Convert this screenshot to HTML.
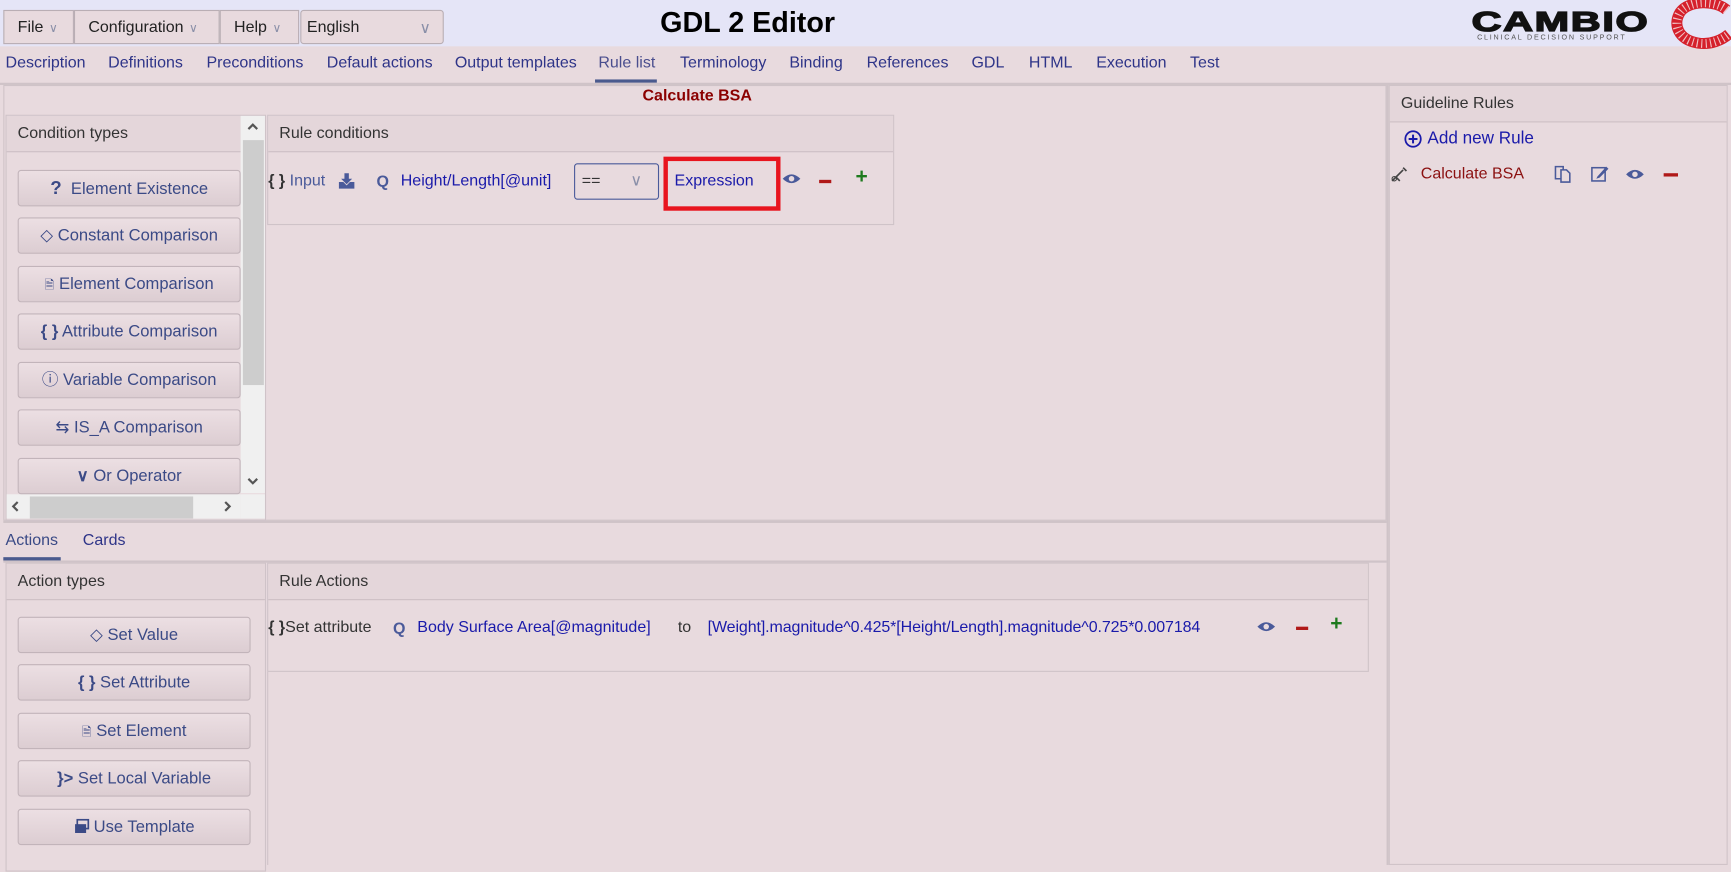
<!DOCTYPE html>
<html><head><meta charset="utf-8"><style>
html,body{margin:0;padding:0;width:1731px;height:865px;overflow:hidden;background:#e8dade}
#w{position:absolute;left:0;top:0;width:1568px;height:784px;transform:scale(1.10395,1.1033);transform-origin:0 0;font-family:"Liberation Sans",Arial,sans-serif;font-size:14.5px;color:#333;background:#e8dade}
.a{position:absolute;white-space:nowrap}
.hdr{left:0;top:0;width:1568px;height:42px;background:#e5e5f7}
.mb{top:9px;height:31px;border:1px solid #b9aeb4;background:#e8dade;line-height:31px;color:#222;padding:0 0 0 12px;box-sizing:border-box}
.chev{color:#8a8fa8;font-size:11px;margin-left:5px}
.tab{top:49px;color:#2e3488}
.box{border:1px solid #cfc3c8;box-sizing:border-box}
.ph{background:#e4d6da;border-bottom:1px solid #cdbfc4;color:#333;line-height:32px;padding-left:10px;box-sizing:border-box}
.btn{left:16px;width:211px;height:33px;border:1px solid #c2b4ba;border-radius:3px;background:linear-gradient(#ecdfe3,#dccdd2);box-sizing:border-box;text-align:center;line-height:31px;color:#3b4a86;font-size:15px}
.btn b{color:#3b4a86}
.blue{color:#1a1aaa}
.ic{color:#4a5a9a}
svg{overflow:visible}
</style></head><body><div id="w">
<div class="a hdr"></div>
<div class="a mb" style="left:3px;width:64px">File<span class="chev">&#8744;</span></div>
<div class="a mb" style="left:67px;width:132px">Configuration<span class="chev">&#8744;</span></div>
<div class="a mb" style="left:199px;width:72px">Help<span class="chev">&#8744;</span></div>
<div class="a mb" style="left:272px;width:130px;padding-left:5px;border-radius:3px">English<span class="chev" style="position:absolute;left:102px;font-size:14px">&#8744;</span></div>
<div class="a" style="left:598px;top:5px;font-size:26px;font-weight:bold;color:#000">GDL 2 Editor</div>
<div class="a" style="left:1333px;top:6px;font-size:25px;font-weight:bold;color:#111;letter-spacing:1px;transform:scale(1.5,1);transform-origin:0 0;-webkit-text-stroke:1.2px #111">CAMBIO</div>
<div class="a" style="left:1338px;top:31px;font-size:6.5px;color:#555;letter-spacing:1.6px">CLINICAL DECISION SUPPORT</div>
<svg class="a" style="left:1508px;top:0" width="60" height="42" viewBox="0 0 60 42"><path d="M56 9 C46 0 22 0 14 11 C7 22 12 36 30 39 C42 41 52 36 58 31" fill="none" stroke="#d5202b" stroke-width="10"/><path d="M56 9 C46 0 22 0 14 11 C7 22 12 36 30 39 C42 41 52 36 58 31" fill="none" stroke="#f0c0c4" stroke-width="8" stroke-dasharray="1 3"/></svg>
<div class="a tab" style="left:5px">Description</div>
<div class="a tab" style="left:98px">Definitions</div>
<div class="a tab" style="left:187px">Preconditions</div>
<div class="a tab" style="left:296px">Default actions</div>
<div class="a tab" style="left:412px">Output templates</div>
<div class="a tab" style="left:542px;color:#4a4e8e">Rule list</div>
<div class="a" style="left:539px;top:72px;width:56px;height:3px;background:#4a5a8e"></div>
<div class="a tab" style="left:616px">Terminology</div>
<div class="a tab" style="left:715px">Binding</div>
<div class="a tab" style="left:785px">References</div>
<div class="a tab" style="left:880px">GDL</div>
<div class="a tab" style="left:932px">HTML</div>
<div class="a tab" style="left:993px">Execution</div>
<div class="a tab" style="left:1078px">Test</div>
<div class="a" style="left:0;top:75px;width:1568px;height:2px;background:#cfc3c8"></div>
<div class="a box" style="left:3px;top:77px;width:1253px;height:395px"></div>
<div class="a" style="left:582px;top:79px;font-weight:bold;color:#8b0000">Calculate BSA</div>
<div class="a box" style="left:5px;top:104px;width:236px;height:368px"></div>
<div class="a ph" style="left:6px;top:105px;width:212px;height:33px">Condition types</div>
<div class="a" style="left:218px;top:105px;width:22px;height:342px;background:#f0f0f0"></div>
<div class="a" style="left:220px;top:127px;width:19px;height:222px;background:#cdcdcd"></div>
<svg class="a" style="left:224px;top:111px" width="10" height="8"><path d="M1 6 L5 2 L9 6" fill="none" stroke="#555" stroke-width="2"/></svg>
<svg class="a" style="left:224px;top:432px" width="10" height="8"><path d="M1 2 L5 6 L9 2" fill="none" stroke="#555" stroke-width="2"/></svg>
<div class="a" style="left:6px;top:448px;width:212px;height:22px;background:#f0f0f0"></div>
<div class="a" style="left:27px;top:450px;width:148px;height:20px;background:#cdcdcd"></div>
<svg class="a" style="left:10px;top:454px" width="8" height="10"><path d="M6 1 L2 5 L6 9" fill="none" stroke="#555" stroke-width="2"/></svg>
<svg class="a" style="left:202px;top:454px" width="8" height="10"><path d="M2 1 L6 5 L2 9" fill="none" stroke="#555" stroke-width="2"/></svg>
<div class="a" style="left:218px;top:448px;width:22px;height:22px;background:#f0f0f0"></div>
<div class="a btn" style="top:154px;width:202px"><b style="font-size:17px">?</b>&nbsp; Element Existence</div>
<div class="a btn" style="top:197px;width:202px">&#9671; Constant Comparison</div>
<div class="a btn" style="top:241px;width:202px"><span style="font-size:11px">&#128462;</span> Element Comparison</div>
<div class="a btn" style="top:284px;width:202px"><b>{ }</b> Attribute Comparison</div>
<div class="a btn" style="top:328px;width:202px">&#9432; Variable Comparison</div>
<div class="a btn" style="top:371px;width:202px">&#8646; IS_A Comparison</div>
<div class="a btn" style="top:415px;width:202px"><b>&#8744;</b> Or Operator</div>
<div class="a box" style="left:242px;top:104px;width:568px;height:100px"></div>
<div class="a ph" style="left:243px;top:105px;width:566px;height:33px">Rule conditions</div>
<div class="a" style="left:243px;top:156px"><b style="color:#333">{ }</b> <span style="color:#4a5a9a">Input</span></div>
<svg class="a" style="left:306px;top:156px" width="16" height="16"><path d="M1 9 L1 15 L15 15 L15 9 L11 9 L8 12 L5 9 Z" fill="#4a5a9a"/><path d="M6 1 L10 1 L10 6 L13 6 L8 11 L3 6 L6 6 Z" fill="#4a5a9a"/></svg>
<div class="a ic" style="left:341px;top:157px;font-weight:bold">Q</div>
<div class="a blue" style="left:363px;top:156px">Height/Length[@unit]</div>
<div class="a" style="left:520px;top:148px;width:77px;height:33px;border:1px solid #4a5a9a;border-radius:3px;box-sizing:border-box;padding:7px 6px;color:#333">==<span style="position:absolute;left:50px;color:#8a8fa8">&#8744;</span></div>
<div class="a" style="left:601px;top:142px;width:106px;height:49px;border:4px solid #e8141e;box-sizing:border-box"></div>
<div class="a blue" style="left:611px;top:156px">Expression</div>
<svg class="a" style="left:709px;top:157px" width="16" height="10"><path d="M0 5 Q8 -3 16 5 Q8 13 0 5Z" fill="#4a5a9a"/><circle cx="8" cy="5" r="2.5" fill="#e8dade"/></svg>
<div class="a" style="left:742px;top:163px;width:11px;height:2.5px;background:#b01818"></div>
<div class="a" style="left:775px;top:150px;color:#1e7a1e;font-weight:bold;font-size:19px">+</div>
<div class="a" style="left:3px;top:472px;width:1253px;height:2px;background:#cfc3c8"></div>
<div class="a" style="left:5px;top:482px;color:#3a4a86">Actions</div>
<div class="a" style="left:3px;top:505px;width:52px;height:3px;background:#4a5a8e"></div>
<div class="a" style="left:75px;top:482px;color:#2e3488">Cards</div>
<div class="a" style="left:3px;top:508px;width:1253px;height:2px;background:#cfc3c8"></div>
<div class="a box" style="left:5px;top:510px;width:236px;height:280px"></div>
<div class="a ph" style="left:6px;top:511px;width:234px;height:33px">Action types</div>
<div class="a btn" style="top:559px">&#9671; Set Value</div>
<div class="a btn" style="top:602px"><b>{ }</b> Set Attribute</div>
<div class="a btn" style="top:646px"><span style="font-size:11px">&#128462;</span> Set Element</div>
<div class="a btn" style="top:689px"><b>}&gt;</b> Set Local Variable</div>
<div class="a btn" style="top:733px"><svg width="14" height="14" style="vertical-align:-2px"><rect x="3" y="1" width="10" height="8" fill="none" stroke="#3b4a86" stroke-width="1.5"/><rect x="1" y="5" width="10" height="8" fill="#3b4a86"/></svg> Use Template</div>
<div class="a box" style="left:242px;top:510px;width:998px;height:99px"></div>
<div class="a ph" style="left:243px;top:511px;width:996px;height:33px">Rule Actions</div>
<div class="a" style="left:243px;top:561px"><b>{ }</b>Set attribute</div>
<div class="a ic" style="left:356px;top:562px;font-weight:bold">Q</div>
<div class="a blue" style="left:378px;top:561px">Body Surface Area[@magnitude]</div>
<div class="a" style="left:614px;top:561px">to</div>
<div class="a blue" style="left:641px;top:561px;letter-spacing:-0.1px">[Weight].magnitude^0.425*[Height/Length].magnitude^0.725*0.007184</div>
<svg class="a" style="left:1139px;top:563px" width="16" height="10"><path d="M0 5 Q8 -3 16 5 Q8 13 0 5Z" fill="#4a5a9a"/><circle cx="8" cy="5" r="2.5" fill="#e8dade"/></svg>
<div class="a" style="left:1174px;top:568px;width:11px;height:2.5px;background:#b01818"></div>
<div class="a" style="left:1205px;top:555px;color:#1e7a1e;font-weight:bold;font-size:19px">+</div>
<div class="a" style="left:242px;top:609px;width:1px;height:175px;background:#cfc3c8"></div>
<div class="a" style="left:1256px;top:77px;width:2px;height:707px;background:#cfc3c8"></div>
<div class="a box" style="left:1258px;top:77px;width:307px;height:707px"></div>
<div class="a ph" style="left:1259px;top:78px;width:305px;height:33px;padding-left:10px">Guideline Rules</div>
<svg class="a" style="left:1272px;top:118px" width="16" height="16"><circle cx="8" cy="8" r="7" fill="none" stroke="#1a1aaa" stroke-width="1.6"/><path d="M8 4 V12 M4 8 H12" stroke="#1a1aaa" stroke-width="1.8"/></svg>
<div class="a blue" style="left:1293px;top:117px;font-size:15.5px">Add new Rule</div>
<svg class="a" style="left:1259px;top:150px" width="16" height="16"><path d="M2 14 L12 4 M5 10 L9 14 M12 2 L15 5" stroke="#444" stroke-width="1.5" fill="none"/><circle cx="4" cy="12" r="2" fill="none" stroke="#444"/></svg>
<div class="a" style="left:1287px;top:150px;color:#8b1010">Calculate BSA</div>
<svg class="a" style="left:1408px;top:150px" width="16" height="16"><path d="M1 1 H8 V12 H1 Z" fill="none" stroke="#4a5a9a" stroke-width="1.4"/><path d="M6 4 H11 L14 7 V15 H6 Z" fill="#e8dade" stroke="#4a5a9a" stroke-width="1.4"/></svg>
<svg class="a" style="left:1441px;top:149px" width="16" height="16"><rect x="1" y="3" width="12" height="12" fill="none" stroke="#4a5a9a" stroke-width="1.4"/><path d="M6 11 L14 2 L16 4 L8 12 L5 13 Z" fill="#4a5a9a"/></svg>
<svg class="a" style="left:1473px;top:153px" width="16" height="10"><path d="M0 5 Q8 -3 16 5 Q8 13 0 5Z" fill="#4a5a9a"/><circle cx="8" cy="5" r="2.5" fill="#e8dade"/></svg>
<div class="a" style="left:1507px;top:157px;width:13px;height:2.5px;background:#b01818"></div>
</div></body></html>
